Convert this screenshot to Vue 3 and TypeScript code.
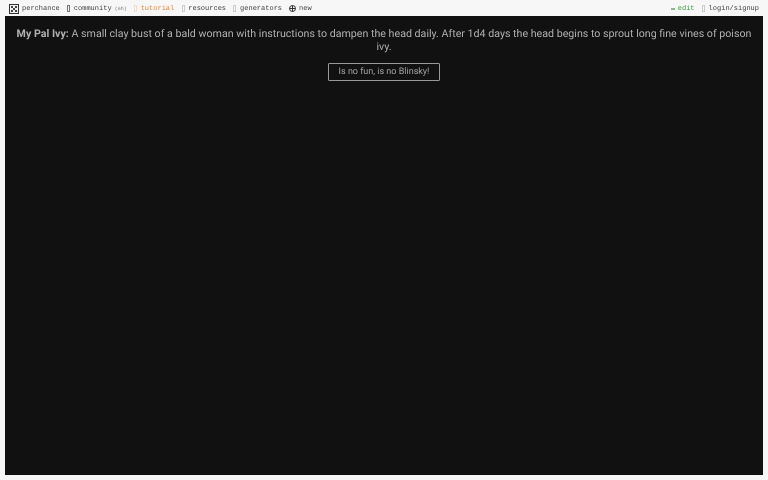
<script setup lang="ts">
interface NavItem { label: string; extra?: string; cls?: string; glyph: 'tofu' | 'dim' | 'globe' }
const left: NavItem[] = [
  { label: 'community', extra: '(6h)', glyph: 'tofu' },
  { label: 'tutorial', cls: 'orange', glyph: 'dim' },
  { label: 'resources', cls: 'tight', glyph: 'dim' },
  { label: 'generators', glyph: 'dim' },
  { label: 'new', glyph: 'globe' },
]
</script>

<template>
  <div class="page">
    <nav class="bar">
      <div class="group">
        <a class="brand">
          <svg class="die" width="10" height="10" viewBox="0 0 10 10">
            <rect x="0.5" y="0.5" width="9" height="9" fill="#eee" stroke="#333" />
            <rect x="2" y="2" width="2" height="2" fill="#444" />
            <rect x="6" y="2" width="2" height="2" fill="#444" />
            <rect x="4" y="4" width="2" height="2" fill="#444" />
            <rect x="2" y="6" width="2" height="2" fill="#444" />
            <rect x="6" y="6" width="2" height="2" fill="#444" />
          </svg>
          <span>perchance</span>
        </a>
        <a v-for="it in left" :key="it.label" class="item" :class="it.cls">
          <svg v-if="it.glyph === 'globe'" class="globe" width="7" height="7" viewBox="0 0 7 7">
            <circle cx="3.5" cy="3.5" r="3" fill="none" stroke="#333" />
            <path d="M0.5 3.5H6.5M3.5 0.5V6.5" stroke="#333" />
          </svg>
          <span v-else class="tofu" :class="it.glyph"></span>
          <span>{{ it.label }}</span>
          <small v-if="it.extra" class="extra">{{ it.extra }}</small>
        </a>
      </div>
      <div class="group right">
        <a class="item green"><span class="pencil"></span><span>edit</span></a>
        <a class="item"><span class="tofu dim"></span><span>login/signup</span></a>
      </div>
    </nav>
    <main class="panel">
      <p class="text"><b>My Pal Ivy:</b> A small clay bust of a bald woman with instructions to dampen the head daily. After 1d4 days the head begins to sprout long fine vines of poison ivy.</p>
      <button class="btn">Is no fun, is no Blinsky!</button>
    </main>
  </div>
</template>

<style>
html, body { margin: 0; background: #f7f7f7; }
</style>

<style scoped>
.page {
  width: 768px;
  height: 480px;
  display: flex;
  flex-direction: column;
  overflow: hidden;
  background: #f7f7f7;
}
.bar {
  height: 16px;
  flex: none;
  display: flex;
  justify-content: space-between;
  align-items: center;
  padding: 1px 9px 0 9px;
  box-sizing: border-box;
  font-family: "Liberation Mono", monospace;
  font-size: 7px;
  color: #444;
  text-rendering: geometricPrecision;
  will-change: transform;
}
.group { display: flex; align-items: center; gap: 7px; }
.group.right { gap: 7px; }
.brand, .item { display: flex; align-items: center; white-space: nowrap; }
.die { margin-right: 3px; }
.tofu {
  display: inline-block;
  box-sizing: border-box;
  width: 3px;
  height: 7px;
  border: 1px solid #777;
  margin-right: 4px;
}
.tofu.dim { border-color: #ccc; }
.orange .tofu { border-color: #f6dcc0; }
.tight { margin-left: 1px; }
.tight .tofu { margin-right: 3px; }
.globe { margin-right: 3px; }
.extra { font-size: 5px; margin-left: 3px; color: #777; }
.orange { color: #e58a3c; }
.green { color: #3f9a3f; }
.pencil { width: 4px; height: 2px; background: #8b8; margin-right: 3px; }
.panel {
  flex: none;
  width: 758px;
  height: 459px;
  margin-left: 5px;
  box-sizing: border-box;
  background: #111;
  color: #b0b0b0;
  font-family: Roboto, sans-serif;
  font-size: 10.67px;
  line-height: 13px;
  padding: 11px 8px 0;
  display: flex;
  flex-direction: column;
  align-items: center;
  text-rendering: geometricPrecision;
}
.text { margin: 0; text-align: center; width: 100%; will-change: transform; }
.text b { font-weight: 700; }
.btn {
  margin-top: 10px;
  width: 112px;
  height: 18px;
  padding: 0;
  box-sizing: border-box;
  background: #111;
  color: #a0a0a0;
  border: 1px solid #999;
  border-radius: 1px;
  font-family: Roboto, sans-serif;
  font-size: 9px;
  text-rendering: geometricPrecision;
  will-change: transform;
}
</style>
